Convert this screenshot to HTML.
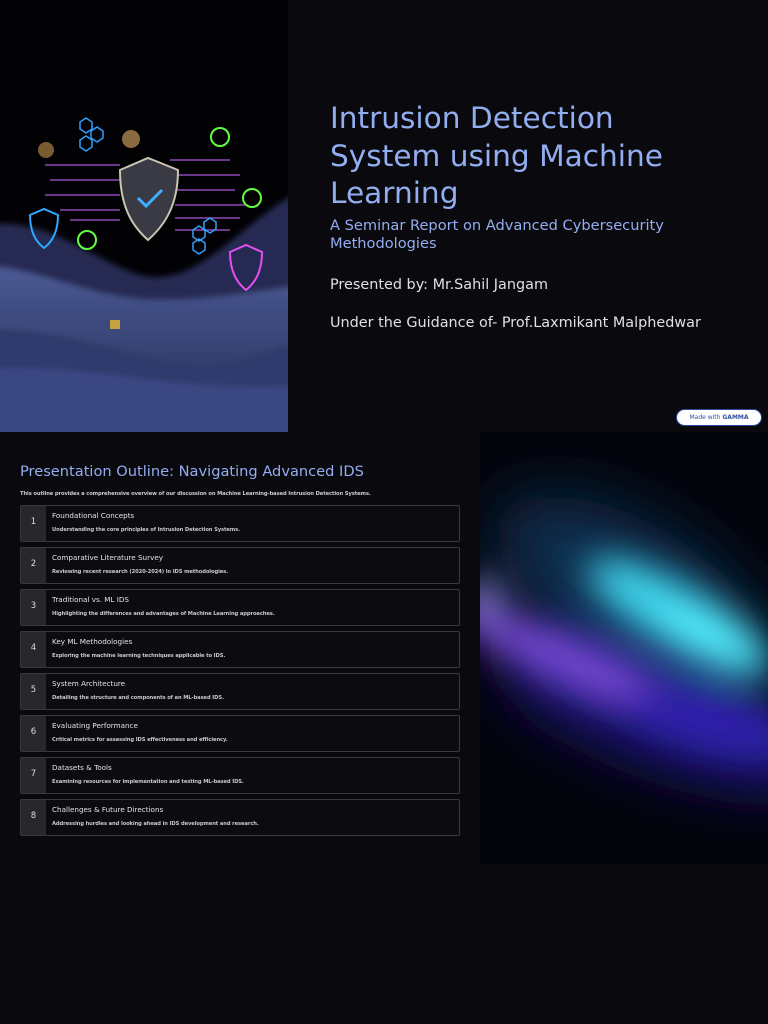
<!DOCTYPE html>
<html><head><meta charset="utf-8"><style>
*{margin:0;padding:0;box-sizing:border-box}
body{width:768px;height:1024px;background:#0a090e;font-family:"DejaVu Sans","Liberation Sans",sans-serif;position:relative;overflow:hidden}
.abs{position:absolute}
h1{position:absolute;left:330px;top:100px;width:400px;font-weight:normal;font-size:29.6px;line-height:37.5px;color:#93aef0}
.sub{left:330px;top:217px;font-size:14.6px;line-height:18px;color:#93aef0;width:380px}
.p{left:330px;font-size:14.4px;color:#e0e0e6}
.item{position:absolute;left:20px;width:440px;height:37px;border:1px solid #38383e;border-radius:2px;background:#0c0c10}
.num{position:absolute;left:0;top:0;width:25px;height:35px;background:#27272d;color:#ddd;font-size:8.5px;text-align:center;line-height:33px}
.t{position:absolute;left:31px;top:5px;font-size:7.2px;color:#e4e4ea}
.d{position:absolute;left:31px;top:21px;font-size:5.2px;color:#c8c8cc;font-weight:bold;letter-spacing:-.1px}
</style></head><body>
<div class="abs" style="left:0;top:0;width:288px;height:432px;overflow:hidden;background:#000">
<svg width="288" height="432" viewBox="0 0 288 432">
<defs><linearGradient id="h" x1="0" y1="0" x2="0" y2="1"><stop offset="0" stop-color="#4b5a95"/><stop offset="1" stop-color="#1e2448"/></linearGradient>
<filter id="b" x="-10%" y="-10%" width="120%" height="120%"><feGaussianBlur stdDeviation="3"/></filter></defs>
<rect width="288" height="432" fill="#020205"/>
<g filter="url(#b)">
<path d="M-20 225 C50 215 90 260 140 275 C200 290 240 220 310 185 V460 H-20Z" fill="#252c52"/>
<path d="M-20 265 C50 270 90 300 160 300 C220 300 260 290 310 285 V460 H-20Z" fill="url(#h)"/>
<path d="M-20 330 C70 325 120 360 200 365 C250 366 270 345 310 340 V460 H-20Z" fill="#2f3a6c"/>
<path d="M-20 370 C90 360 170 395 310 385 V460 H-20Z" fill="#3a4682"/>
</g>
<g stroke="#c060f0" stroke-width="1.2" fill="none" opacity=".9">
<path d="M45 165H120M50 180H120M45 195H120M60 210H120M70 220H120M230 160H170M240 175H175M235 190H175M245 205H175M240 218H175M230 230H175"/></g>
<path d="M120 170 L148 158 L178 170 C178 205 165 225 148 240 C131 225 120 205 120 170Z" fill="#3a3a45" stroke="#c9c3b0" stroke-width="2"/>
<path d="M138 198 L146 206 L162 190" stroke="#3ab0ff" stroke-width="3" fill="none"/>
<path d="M30 215 L44 209 L58 215 C58 232 52 242 44 248 C36 242 30 232 30 215Z" fill="none" stroke="#30a8ff" stroke-width="2"/>
<path d="M230 252 L246 245 L262 252 C262 272 255 283 246 290 C237 283 230 272 230 252Z" fill="none" stroke="#e050f0" stroke-width="2"/>
<g fill="none" stroke="#30a0ff" stroke-width="1.5"><path d="M80 122l6-4 6 4v7l-6 4-6-4z M91 131l6-4 6 4v7l-6 4-6-4z M80 140l6-4 6 4v7l-6 4-6-4z M193 230l6-4 6 4v7l-6 4-6-4z M204 222l6-4 6 4v7l-6 4-6-4z M193 243l6-4 6 4v7l-6 4-6-4z"/></g>
<circle cx="220" cy="137" r="9" fill="none" stroke="#60ff40" stroke-width="2"/>
<circle cx="252" cy="198" r="9" fill="none" stroke="#60ff40" stroke-width="2"/>
<circle cx="87" cy="240" r="9" fill="none" stroke="#60ff40" stroke-width="2"/>
<circle cx="131" cy="139" r="9" fill="#8a6a40"/><circle cx="46" cy="150" r="8" fill="#7a5a30"/>
<rect x="110" y="320" width="10" height="9" fill="#c8a040"/>
</svg></div>
<h1>Intrusion Detection System using Machine Learning</h1>
<div class="abs sub">A Seminar Report on Advanced Cybersecurity Methodologies</div>
<div class="abs p" style="top:277px">Presented by: Mr.Sahil Jangam</div>
<div class="abs p" style="top:315px">Under the Guidance of- Prof.Laxmikant Malphedwar</div>
<div class="abs" style="left:676px;top:409px;width:86px;height:17px;background:#fff;border:1px solid #2a4aa0;border-radius:9px;font-size:6px;color:#3050a0;text-align:center;line-height:15px">Made with <b>GAMMA</b></div>
<div class="abs" style="left:480px;top:432px;width:288px;height:432px;overflow:hidden;background:#04040c">
<svg width="288" height="432" viewBox="0 0 288 432">
<defs><filter id="f" x="-50%" y="-50%" width="200%" height="200%"><feGaussianBlur stdDeviation="18"/></filter>
<filter id="g" x="-50%" y="-50%" width="200%" height="200%"><feGaussianBlur stdDeviation="30"/></filter></defs>
<g filter="url(#g)">
<ellipse cx="150" cy="160" rx="150" ry="70" fill="#0c2f50" transform="rotate(30 150 160)"/>
<ellipse cx="180" cy="280" rx="170" ry="50" fill="#1d1880" transform="rotate(20 180 280)"/>
</g>
<g filter="url(#f)">
<ellipse cx="200" cy="185" rx="105" ry="30" fill="#3fd8f0" transform="rotate(30 200 185)"/>
<ellipse cx="230" cy="205" rx="50" ry="18" fill="#55f0ff" transform="rotate(30 230 205)"/>
<ellipse cx="90" cy="230" rx="130" ry="22" fill="#7a48d8" transform="rotate(24 90 230)"/>
<ellipse cx="230" cy="290" rx="90" ry="25" fill="#3020b0" transform="rotate(15 230 290)"/>
<ellipse cx="5" cy="165" rx="20" ry="20" fill="#7a78c0"/>
</g>
</svg></div>
<div class="abs" style="left:20px;top:463px;font-size:14.6px;color:#93aef0">Presentation Outline: Navigating Advanced IDS</div>
<div class="abs" style="left:20px;top:491px;font-size:5.2px;color:#ccc;font-weight:bold;letter-spacing:-.1px">This outline provides a comprehensive overview of our discussion on Machine Learning-based Intrusion Detection Systems.</div>
<div class="item" style="top:505px"><div class="num">1</div><div class="t">Foundational Concepts</div><div class="d">Understanding the core principles of Intrusion Detection Systems.</div></div>
<div class="item" style="top:547px"><div class="num">2</div><div class="t">Comparative Literature Survey</div><div class="d">Reviewing recent research (2020-2024) in IDS methodologies.</div></div>
<div class="item" style="top:589px"><div class="num">3</div><div class="t">Traditional vs. ML IDS</div><div class="d">Highlighting the differences and advantages of Machine Learning approaches.</div></div>
<div class="item" style="top:631px"><div class="num">4</div><div class="t">Key ML Methodologies</div><div class="d">Exploring the machine learning techniques applicable to IDS.</div></div>
<div class="item" style="top:673px"><div class="num">5</div><div class="t">System Architecture</div><div class="d">Detailing the structure and components of an ML-based IDS.</div></div>
<div class="item" style="top:715px"><div class="num">6</div><div class="t">Evaluating Performance</div><div class="d">Critical metrics for assessing IDS effectiveness and efficiency.</div></div>
<div class="item" style="top:757px"><div class="num">7</div><div class="t">Datasets &amp; Tools</div><div class="d">Examining resources for implementation and testing ML-based IDS.</div></div>
<div class="item" style="top:799px"><div class="num">8</div><div class="t">Challenges &amp; Future Directions</div><div class="d">Addressing hurdles and looking ahead in IDS development and research.</div></div>
</body></html>
